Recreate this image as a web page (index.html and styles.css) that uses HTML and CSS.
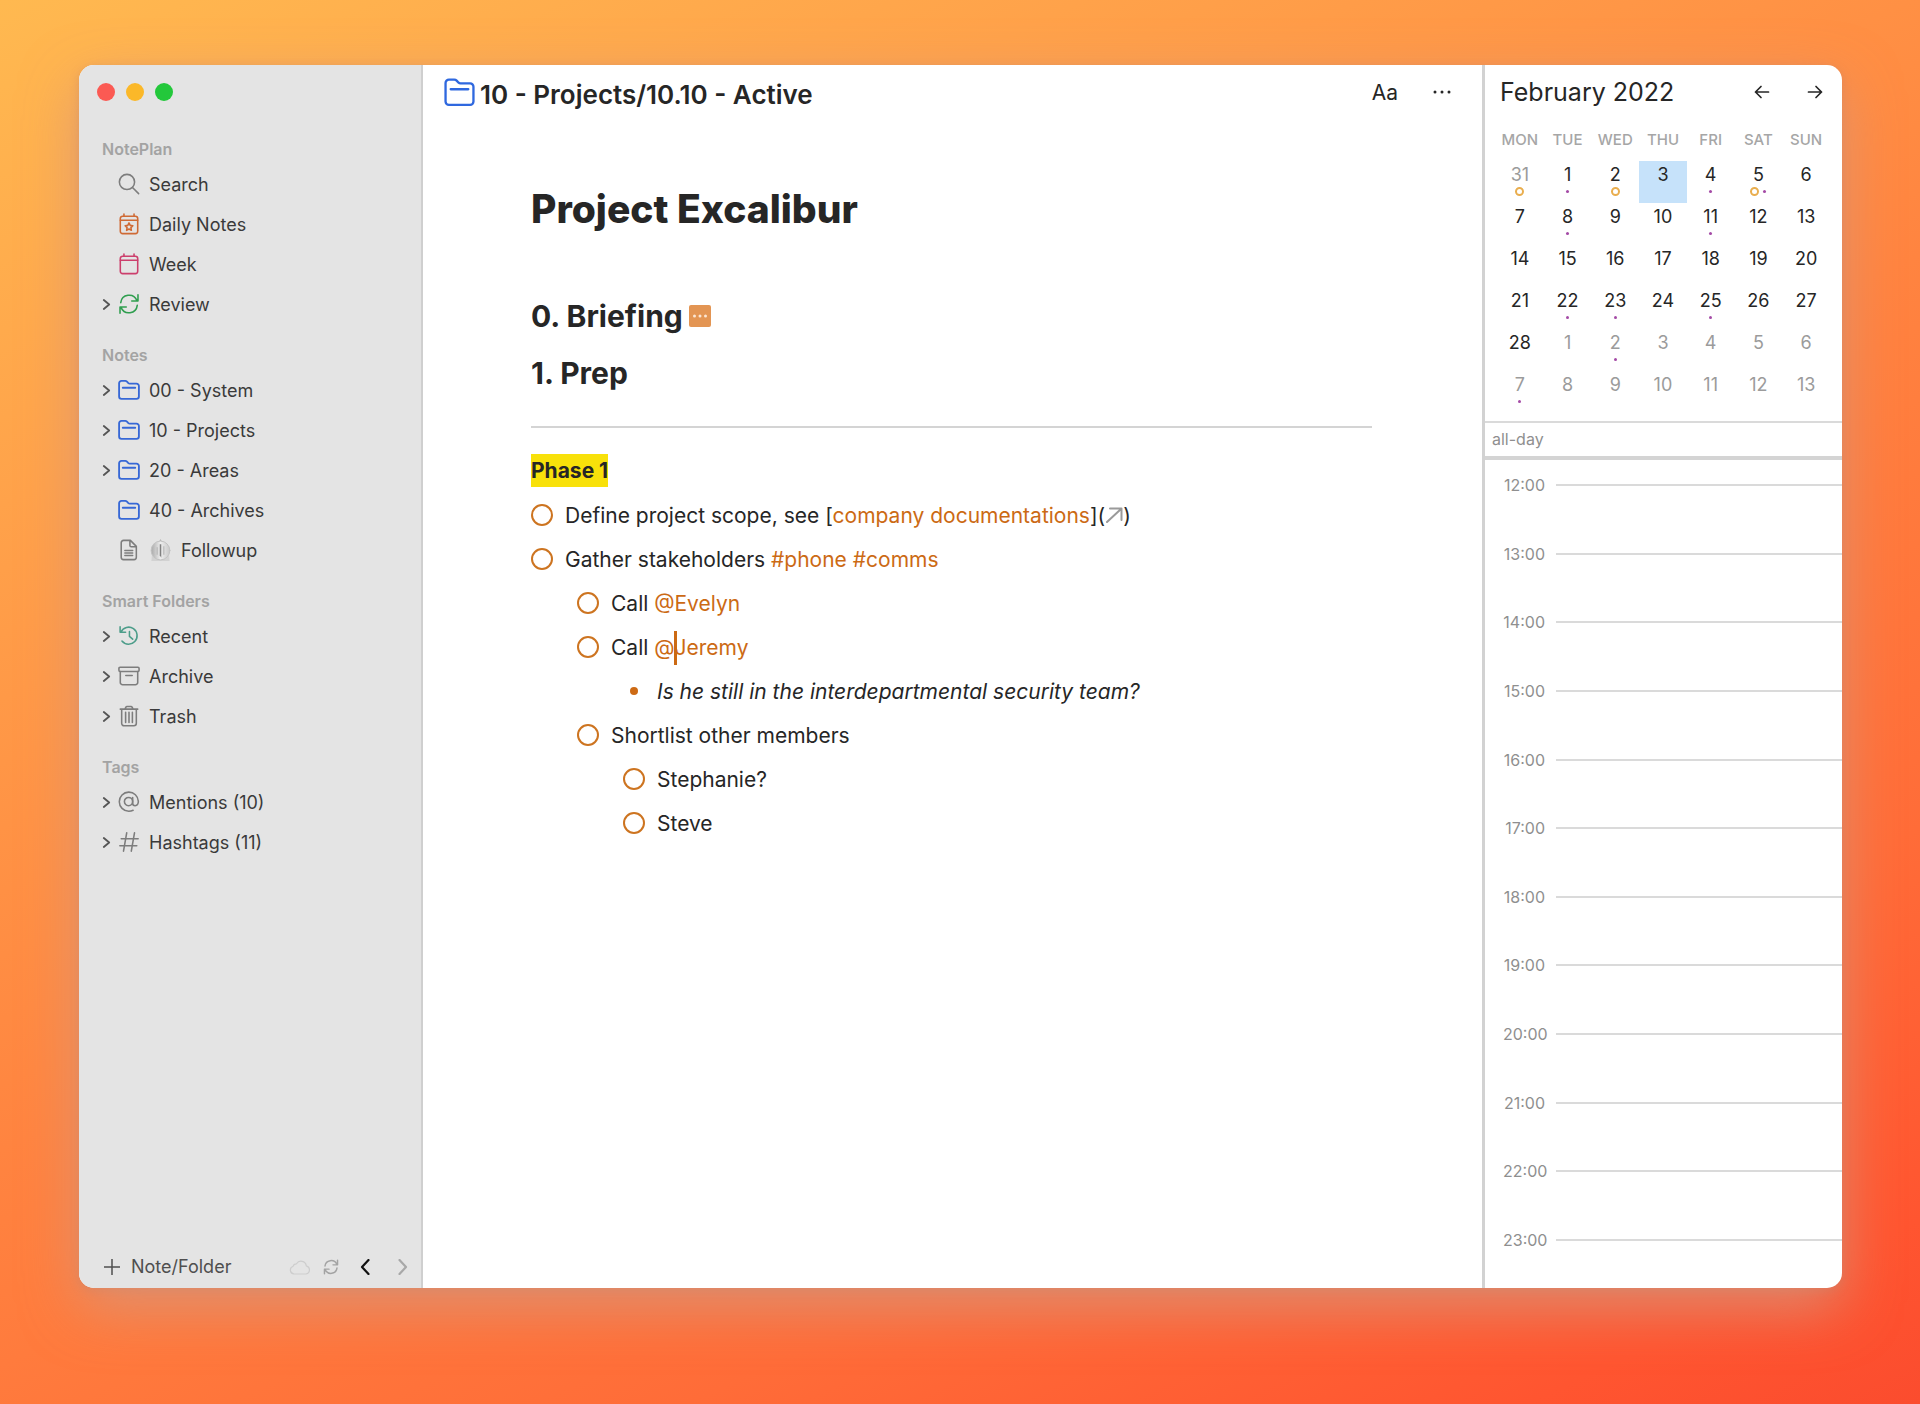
FILE: index.html
```html
<!DOCTYPE html>
<html lang="en">

<head>
  <meta charset="UTF-8" />
  <meta name="viewport" content="width=device-width, initial-scale=1.0" />
  <title>NotePlan - Project Excalibur</title>
  <link rel="stylesheet" href="styles.css">
</head>

<body>
  <!-- shared icons -->
  <svg class="sprite" aria-hidden="true">
    <symbol id="i-chevron" viewBox="0 0 10 14">
      <path d="M2 2l6 5-6 5" />
    </symbol>
    <symbol id="i-folder" viewBox="0 0 24 24">
      <path d="M1.2 4.600a2.600 2.600 0 0 1 2.600-2.600h4.200c.8 0 1.300.3 1.800.8l1.500 1.600c.4.4.8.6 1.400.6h7.500a2.600 2.600 0 0 1 2.600 2.600v11.400a2.600 2.600 0 0 1-2.600 2.600H3.800a2.600 2.600 0 0 1-2.600-2.600z" />
      <path d="M5.200 9.500h13.600" />
    </symbol>
    <symbol id="i-sync" viewBox="0 0 24 24">
      <path d="M3 10.500a9.200 9.200 0 0 1 17.600-2.500M21.800 2v6.800h-6.800M21 13.500a9.200 9.200 0 0 1-17.600 2.500M2.200 22v-6.800H9" />
    </symbol>
  </svg>

  <div class="window">
    <aside class="sidebar">
      <div class="lights">
        <button class="light light-close" aria-label="Close"></button>
        <button class="light light-min" aria-label="Minimize"></button>
        <button class="light light-max" aria-label="Zoom"></button>
      </div>

      <nav class="nav">
        <section class="group">
          <h2>NotePlan</h2>
          <ul>
            <li><span class="toggle"></span><a href="#">
              <svg class="icon gray" viewBox="0 0 24 24"><circle cx="9.800" cy="9.800" r="8.300" /><path d="M15.800 15.800l6.700 6.700" /></svg>
              Search</a></li>
            <li><span class="toggle"></span><a href="#">
              <svg class="icon orange" viewBox="0 0 24 24"><rect x="2.500" y="3.500" width="19" height="19" rx="2.500" /><path d="M2.500 8h19M6.500 1v2.500M17.500 1v2.500M12 10.800l1.300 2.700 2.900.4-2.100 2.100.5 2.900-2.600-1.400-2.600 1.400.5-2.900-2.100-2.100 2.900-.4z" /></svg>
              Daily Notes</a></li>
            <li><span class="toggle"></span><a href="#">
              <svg class="icon pink" viewBox="0 0 24 24"><rect x="2.500" y="3.500" width="19" height="19" rx="2.500" /><path d="M2.500 8h19M6.500 1v2.500M17.500 1v2.500" /></svg>
              Week</a></li>
            <li><button class="toggle" aria-label="Expand Review"><svg><use href="#i-chevron" /></svg></button><a href="#">
              <svg class="icon green"><use href="#i-sync" /></svg>
              Review</a></li>
          </ul>
        </section>

        <section class="group">
          <h2>Notes</h2>
          <ul>
            <li><button class="toggle" aria-label="Expand System"><svg><use href="#i-chevron" /></svg></button><a href="#">
              <svg class="icon blue"><use href="#i-folder" /></svg>
              00 - System</a></li>
            <li><button class="toggle" aria-label="Expand Projects"><svg><use href="#i-chevron" /></svg></button><a href="#">
              <svg class="icon blue"><use href="#i-folder" /></svg>
              10 - Projects</a></li>
            <li><button class="toggle" aria-label="Expand Areas"><svg><use href="#i-chevron" /></svg></button><a href="#">
              <svg class="icon blue"><use href="#i-folder" /></svg>
              20 - Areas</a></li>
            <li><span class="toggle"></span><a href="#">
              <svg class="icon blue"><use href="#i-folder" /></svg>
              40 - Archives</a></li>
            <li><span class="toggle"></span><a href="#">
              <svg class="icon gray" viewBox="0 0 24 24"><path d="M6 1.500h7.500l6.500 6.500v12a2.500 2.500 0 0 1-2.500 2.500H6A2.500 2.500 0 0 1 3.500 20V4A2.500 2.500 0 0 1 6 1.500zM13 1.500V7a1.500 1.500 0 0 0 1.500 1.500H20M7.500 12.500h8.500M7.500 15.300h8.500M7.500 18h8.500" /></svg>
              <svg class="badge-icon" viewBox="0 0 24 24">
                <defs>
                  <linearGradient id="silver" x1="0" y1="0" x2="1" y2="0">
                    <stop offset="0" stop-color="#a9a9a9" />
                    <stop offset=".5" stop-color="#ededed" />
                    <stop offset="1" stop-color="#c9c9c9" />
                  </linearGradient>
                </defs>
                <path d="M3 17l-.5 6h19l-.5-6z" fill="#d2d2d2" stroke="none" />
                <path d="M12 0l1.500 2.500h-3z" fill="#b5b5b5" stroke="none" />
                <circle cx="12" cy="12" r="9.800" fill="url(#silver)" stroke="#c2c2c2" />
                <path d="M11.200 5.500v11.500l1.600 2.500V5.500z" fill="#808080" stroke="none" />
                <path d="M15.500 8v8M8.500 9v7" stroke="#b0b0b0" />
              </svg>
              Followup</a></li>
          </ul>
        </section>

        <section class="group">
          <h2>Smart Folders</h2>
          <ul>
            <li><button class="toggle" aria-label="Expand Recent"><svg><use href="#i-chevron" /></svg></button><a href="#">
              <svg class="icon teal" viewBox="0 0 24 24"><path d="M3.200 7.500A9.300 9.300 0 1 1 4.300 17.500M2.300 2v6h6M12.500 7v5.500l3.500 3" /></svg>
              Recent</a></li>
            <li><button class="toggle" aria-label="Expand Archive"><svg><use href="#i-chevron" /></svg></button><a href="#">
              <svg class="icon gray" viewBox="0 0 24 24"><rect x="1" y="2.500" width="22" height="4.500" rx="1.200" /><path d="M2.500 7v12a2.500 2.500 0 0 0 2.500 2.500h14a2.500 2.500 0 0 0 2.500-2.500V7M8.500 11.500h7" /></svg>
              Archive</a></li>
            <li><button class="toggle" aria-label="Expand Trash"><svg><use href="#i-chevron" /></svg></button><a href="#">
              <svg class="icon gray" viewBox="0 0 24 24"><path d="M2.500 4.500h19M7.500 4.500l1-2a1.500 1.500 0 0 1 1.300-.8h4.400a1.500 1.500 0 0 1 1.300.8l1 2M4 4.500v15.500a2.700 2.700 0 0 0 2.700 2.700h10.600a2.700 2.700 0 0 0 2.700-2.700V4.500M8.300 8v11M12 8v11M15.700 8v11" /></svg>
              Trash</a></li>
          </ul>
        </section>

        <section class="group">
          <h2>Tags</h2>
          <ul>
            <li><button class="toggle" aria-label="Expand Mentions"><svg><use href="#i-chevron" /></svg></button><a href="#">
              <svg class="icon gray" viewBox="0 0 24 24"><circle cx="11.500" cy="11.500" r="4.500" /><path d="M16 7v6.300c0 1.700 1 2.700 2.700 2.700 2.200 0 3.500-1.800 3.500-4.700A10.400 10.400 0 1 0 11.700 22c1.700 0 3.300-.3 4.800-1" /></svg>
              Mentions (10)</a></li>
            <li><button class="toggle" aria-label="Expand Hashtags"><svg><use href="#i-chevron" /></svg></button><a href="#">
              <svg class="icon gray" viewBox="0 0 24 24"><path d="M9.500 2L6 22M18 2l-3.500 20M3.500 8.500h18.500M2 16h18.500" /></svg>
              Hashtags (11)</a></li>
          </ul>
        </section>
      </nav>

      <footer class="toolbar">
        <button class="new-note">
          <svg viewBox="0 0 16 16"><path d="M8 0v16M0 8h16" /></svg>
          Note/Folder
        </button>
        <button class="tool tool-cloud" aria-label="Cloud"><svg viewBox="0 0 22 16"><path d="M5 15a4 4 0 0 1-.8-7.800 3.300 3.300 0 0 1 3.300-2.400A5.300 5.300 0 0 1 17.300 6.800 4.200 4.200 0 0 1 17 15z" /></svg></button>
        <button class="tool tool-sync" aria-label="Sync"><svg><use href="#i-sync" /></svg></button>
        <button class="tool tool-back" aria-label="Back"><svg viewBox="0 0 10 16"><path d="M8.500 1L2 8l6.500 7" /></svg></button>
        <button class="tool tool-forward" aria-label="Forward"><svg viewBox="0 0 10 16"><path d="M1.500 1L8 8l-6.500 7" /></svg></button>
      </footer>
    </aside>

    <main class="editor">
      <header class="editor-bar">
        <svg class="icon blue"><use href="#i-folder" /></svg>
        <span class="path">10 - Projects/10.10 - Active</span>
        <button class="bar-button" aria-label="Text style">Aa</button>
        <button class="bar-button" aria-label="More">
          <svg viewBox="0 0 20 4"><circle cx="3" cy="2" r="1.500" /><circle cx="10" cy="2" r="1.500" /><circle cx="17" cy="2" r="1.500" /></svg>
        </button>
      </header>

      <article class="note">
        <h1>Project Excalibur</h1>
        <h2>0. Briefing<button class="fold" aria-label="Unfold section"><svg viewBox="0 0 22 22"><circle cx="5.500" cy="11" r="1.500" /><circle cx="11" cy="11" r="1.500" /><circle cx="16.500" cy="11" r="1.500" /></svg></button></h2>
        <h2>1. Prep</h2>
        <hr />
        <p class="phase"><mark>Phase 1</mark></p>
        <ul class="tasks">
          <li><input type="checkbox" id="t1" /><label for="t1">Define project scope, see [<a href="#">company documentations</a>](<svg class="out" viewBox="0 0 18 16"><path d="M2 15L16 2M5 1.500h11.500V13" /></svg>)</label></li>
          <li><input type="checkbox" id="t2" /><label for="t2">Gather stakeholders <a href="#">#phone</a> <a href="#">#comms</a></label></li>
          <li class="indent-1"><input type="checkbox" id="t3" /><label for="t3">Call <a href="#">@Evelyn</a></label></li>
          <li class="indent-1"><input type="checkbox" id="t4" /><label for="t4">Call <a href="#">@<span class="caret"></span>Jeremy</a></label></li>
          <li class="indent-2"><span class="bullet"></span><em>Is he still in the interdepartmental security team?</em></li>
          <li class="indent-1"><input type="checkbox" id="t5" /><label for="t5">Shortlist other members</label></li>
          <li class="indent-2"><input type="checkbox" id="t6" /><label for="t6">Stephanie?</label></li>
          <li class="indent-2"><input type="checkbox" id="t7" /><label for="t7">Steve</label></li>
        </ul>
      </article>
    </main>

    <aside class="agenda">
      <header class="month">
        <h2>February 2022</h2>
        <button aria-label="Previous month"><svg viewBox="0 0 16 14"><path d="M14.500 7h-13M7 1.500L1.500 7 7 12.500" /></svg></button>
        <button aria-label="Next month"><svg viewBox="0 0 16 14"><path d="M1.500 7h13M9 1.500L14.500 7 9 12.500" /></svg></button>
      </header>

      <div class="calendar-box">
        <table class="calendar">
          <thead>
            <tr><th>MON</th><th>TUE</th><th>WED</th><th>THU</th><th>FRI</th><th>SAT</th><th>SUN</th></tr>
          </thead>
          <tbody>
            <tr>
              <td class="other">31<div class="marks"><i class="ring"></i></div></td>
              <td>1<div class="marks"><i class="dot"></i></div></td>
              <td>2<div class="marks"><i class="ring"></i></div></td>
              <td class="today">3</td>
              <td>4<div class="marks"><i class="dot"></i></div></td>
              <td>5<div class="marks"><i class="ring"></i><i class="dot"></i></div></td>
              <td>6</td>
            </tr>
            <tr>
              <td>7</td>
              <td>8<div class="marks"><i class="dot"></i></div></td>
              <td>9</td>
              <td>10</td>
              <td>11<div class="marks"><i class="dot"></i></div></td>
              <td>12</td>
              <td>13</td>
            </tr>
            <tr><td>14</td><td>15</td><td>16</td><td>17</td><td>18</td><td>19</td><td>20</td></tr>
            <tr>
              <td>21</td>
              <td>22<div class="marks"><i class="dot"></i></div></td>
              <td>23<div class="marks"><i class="dot"></i></div></td>
              <td>24</td>
              <td>25<div class="marks"><i class="dot"></i></div></td>
              <td>26</td>
              <td>27</td>
            </tr>
            <tr>
              <td>28</td>
              <td class="other">1</td>
              <td class="other">2<div class="marks"><i class="dot"></i></div></td>
              <td class="other">3</td>
              <td class="other">4</td>
              <td class="other">5</td>
              <td class="other">6</td>
            </tr>
            <tr>
              <td class="other">7<div class="marks"><i class="dot"></i></div></td>
              <td class="other">8</td>
              <td class="other">9</td>
              <td class="other">10</td>
              <td class="other">11</td>
              <td class="other">12</td>
              <td class="other">13</td>
            </tr>
          </tbody>
        </table>
      </div>

      <div class="all-day">all-day</div>

      <ol class="hours">
        <li>12:00</li>
        <li>13:00</li>
        <li>14:00</li>
        <li>15:00</li>
        <li>16:00</li>
        <li>17:00</li>
        <li>18:00</li>
        <li>19:00</li>
        <li>20:00</li>
        <li>21:00</li>
        <li>22:00</li>
        <li>23:00</li>
      </ol>
    </aside>
  </div>
</body>

</html>
```

FILE: styles.css
```css
* {
  box-sizing: border-box;
}

body {
  display: flex;
  min-height: 100vh;
  margin: 0;
  padding: 65px 78px 116px 79px;
  font-family: Inter, "Liberation Sans", sans-serif;
  color: #262626;
  background: linear-gradient(155deg, #ffb950 0%, #ffa24a 22%, #ff8440 50%, #ff6c38 75%, #ff5530 92%, #fb4c2e 100%);
}

h1,
h2,
p,
ul,
ol {
  margin: 0;
  padding: 0;
}

ul,
ol {
  list-style: none;
}

a {
  color: inherit;
  text-decoration: none;
}

button {
  padding: 0;
  border: none;
  background: none;
  font: inherit;
  color: inherit;
  cursor: pointer;
}

svg {
  display: block;
  fill: none;
  stroke: currentColor;
  stroke-linecap: round;
  stroke-linejoin: round;
}

.sprite {
  position: absolute;
  width: 0;
  height: 0;
}

.window {
  display: flex;
  flex: 1;
  border-radius: 15px;
  background: #fff;
  overflow: hidden;
  box-shadow: 0 20px 56px rgba(215, 150, 125, 0.8), 0 3px 10px rgba(190, 120, 95, 0.4);
}

/* sidebar */

.sidebar {
  display: flex;
  flex-direction: column;
  width: 344px;
  border-right: 2px solid #cfcfcf;
  background: #e4e4e4;
}

.lights {
  display: flex;
  gap: 11px;
  height: 69px;
  padding: 18px;
}

.light {
  width: 18px;
  height: 18px;
  border-radius: 50%;
}

.light-close {
  background: #fb5a53;
}

.light-min {
  background: #fbb829;
}

.light-max {
  background: #23c83b;
}

.nav {
  flex: 1;
  padding-left: 23px;
}

.group {
  margin-bottom: 16px;
}

.group h2 {
  font-size: 16px;
  font-weight: 600;
  line-height: 30px;
  color: #a3a3a3;
}

.group li {
  display: flex;
  align-items: center;
  height: 40px;
  font-size: 18px;
  color: #3a3a3a;
}

.group a {
  display: flex;
  align-items: center;
  gap: 9px;
}

.toggle {
  width: 16px;
  color: #555;
}

.toggle svg {
  width: 9px;
  height: 13px;
  stroke-width: 2;
}

.icon {
  width: 22px;
  height: 22px;
  stroke-width: 1.7;
}

.badge-icon {
  width: 23px;
  height: 23px;
  stroke-width: 1;
}

.gray {
  color: #7d7d7d;
}

.orange {
  color: #cf6a35;
}

.pink {
  color: #cc3f6c;
}

.green {
  color: #2f9e4f;
}

.blue {
  color: #3768d6;
  stroke-width: 2;
}

.teal {
  color: #4d9d8a;
}

.toolbar {
  display: flex;
  align-items: center;
  height: 43px;
  padding: 0 13px 0 25px;
}

.new-note {
  display: flex;
  align-items: center;
  gap: 11px;
  margin-right: auto;
  font-size: 18px;
  color: #4f4f4f;
}

.new-note svg {
  width: 16px;
  height: 16px;
  stroke-width: 1.5;
}

.tool svg {
  width: 10px;
  height: 16px;
  stroke-width: 2.2;
}

.tool-cloud {
  margin-right: 12px;
  color: #cdcdcd;
}

.tool-cloud svg {
  width: 22px;
  stroke-width: 1.2;
}

.tool-sync {
  margin-right: 21px;
  color: #a3a3a3;
}

.tool-sync svg {
  width: 16px;
}

.tool-back {
  margin-right: 28px;
  color: #111;
}

.tool-forward {
  color: #a8a8a8;
}

/* editor */

.editor {
  flex: 1;
}

.editor-bar {
  display: flex;
  align-items: center;
  height: 54px;
  padding: 0 30px 0 21px;
}

.editor-bar .icon {
  width: 31px;
  height: 31px;
  margin-right: 5px;
  color: #2f68df;
  stroke-width: 1.8;
}

.path {
  margin-right: auto;
  padding-top: 4px;
  font-size: 26px;
  font-weight: 600;
}

.bar-button {
  margin-left: 34px;
  font-size: 21px;
}

.bar-button svg {
  width: 20px;
  height: 4px;
  fill: currentColor;
  stroke: none;
}

.note {
  padding: 66px 110px 40px 108px;
  font-size: 21px;
}

.note h1 {
  margin-bottom: 54px;
  font-size: 39px;
  font-weight: 800;
  line-height: 48px;
}

.note h2 {
  display: flex;
  align-items: center;
  height: 57px;
  font-size: 30px;
  font-weight: 700;
}

.fold {
  width: 22px;
  margin-left: 6px;
  border-radius: 2px;
  background: #e39553;
}

.fold svg {
  fill: #fbe6d3;
  stroke: none;
}

.note hr {
  margin: 25px 0 26px;
  border: none;
  border-top: 2px solid #d4d4d4;
}

.phase {
  margin-bottom: 6px;
  font-weight: 700;
  line-height: 33px;
}

.phase mark {
  display: inline-block;
  color: inherit;
  background: #f8e10a;
}

.tasks li {
  display: flex;
  align-items: center;
  height: 44px;
}

.tasks .indent-1 {
  padding-left: 46px;
}

.tasks .indent-2 {
  padding-left: 92px;
}

.tasks input {
  appearance: none;
  width: 22px;
  height: 22px;
  margin: 0 12px 0 0;
  border: 2px solid #cd7420;
  border-radius: 50%;
}

.tasks a {
  color: #cc6a14;
}

.bullet {
  width: 8px;
  height: 8px;
  margin: 0 19px 0 7px;
  border-radius: 50%;
  background: #cd6a14;
}

.out {
  display: inline-block;
  width: 18px;
  height: 16px;
  stroke-width: 2;
  color: #9a9a9a;
}

.caret {
  position: relative;
}

.caret::before {
  content: "";
  position: absolute;
  top: -4px;
  left: -1px;
  width: 3px;
  height: 34px;
  background: #cc6a14;
}

/* calendar and day timeline */

.agenda {
  display: flex;
  flex-direction: column;
  width: 360px;
  border-left: 3px solid #d2d2d2;
}

.month {
  display: flex;
  align-items: center;
  height: 53px;
  padding: 0 19px 0 15px;
}

.month h2 {
  margin-right: auto;
  font-size: 25px;
  font-weight: 400;
}

.month button {
  margin-left: 37px;
}

.month svg {
  width: 16px;
  height: 14px;
  stroke-width: 1.7;
}

.calendar-box {
  padding: 0 12px 0 11px;
}

.calendar {
  width: 100%;
  border-collapse: collapse;
  table-layout: fixed;
}

.calendar th {
  height: 43px;
  padding: 0;
  font-size: 15px;
  font-weight: 500;
  color: #a6a6a6;
}

.calendar td {
  height: 42px;
  padding: 2px 0 0;
  font-size: 18px;
  line-height: 24px;
  text-align: center;
  vertical-align: top;
}

.calendar .other {
  color: #9b9b9b;
}

.calendar .today {
  background: #c6e2fa;
}

.marks {
  display: flex;
  align-items: center;
  justify-content: center;
  gap: 4px;
  height: 9px;
}

.ring {
  width: 9px;
  height: 9px;
  border: 2px solid #e9ae4f;
  border-radius: 50%;
}

.dot {
  width: 3px;
  height: 3px;
  border-radius: 50%;
  background: #a44aa6;
}

.all-day {
  margin-top: 8px;
  padding-left: 7px;
  border-top: 2px solid #dadada;
  border-bottom: 4px solid #d4d4d4;
  font-size: 16px;
  line-height: 33px;
  color: #8f8f8f;
}

.hours {
  flex: 1;
  display: grid;
  grid-template-rows: repeat(11, 1fr) auto;
  padding: 15px 0 38px 18px;
  font-size: 16px;
  line-height: 20px;
  color: #8f8f8f;
}

.hours li {
  display: grid;
  grid-template-columns: 42px 1fr;
  gap: 11px;
  text-align: right;
}

.hours li::after {
  content: "";
  height: 2px;
  margin-top: 9px;
  background: #dadada;
}
```
